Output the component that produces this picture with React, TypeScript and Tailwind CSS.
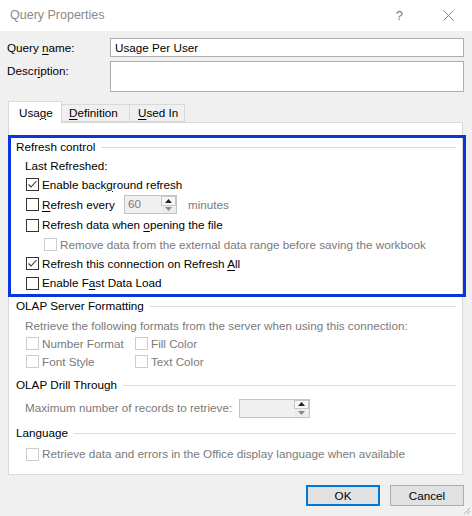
import React from 'react';

function Box({ checked, disabled }: { checked?: boolean; disabled?: boolean }) {
  return (
    <span
      className={`flex h-[13px] w-[13px] shrink-0 items-center justify-center border bg-white ${
        disabled ? 'border-[#cccccc]' : 'border-[#333333]'
      }`}
    >
      {checked && (
        <svg width="11" height="11" viewBox="0 0 11 11">
          <path d="M1.5 5.5 L4 8 L9.5 2" stroke="#333333" strokeWidth="1.1" fill="none" />
        </svg>
      )}
    </span>
  );
}

function Check({
  label,
  checked,
  disabled,
  className = '',
}: {
  label: React.ReactNode;
  checked?: boolean;
  disabled?: boolean;
  className?: string;
}) {
  return (
    <div className={`flex items-center gap-[3px] ${className}`}>
      <Box checked={checked} disabled={disabled} />
      <span className={disabled ? 'text-[#7a7a7a]' : 'text-black'}>{label}</span>
    </div>
  );
}

function Group({ title, className = '' }: { title: string; className?: string }) {
  return (
    <div className={`flex h-[20px] items-center ${className}`}>
      <span>{title}</span>
      <span className="ml-[6px] h-px flex-1 bg-[#dcdcdc]" />
    </div>
  );
}

function Spinner({ value, className = '' }: { value?: string; className?: string }) {
  return (
    <div className={`flex border border-[#c4c4c4] bg-[#f0f0f0] ${className}`}>
      <span className="flex-1 pl-[3px] leading-[16px] text-[#7a7a7a]">{value}</span>
      <div className="flex w-[15px] flex-col">
        <span className="flex flex-1 items-center justify-center border border-[#c8c8c8] bg-[#f7f7f7]">
          <svg width="7" height="4" viewBox="0 0 7 4">
            <path d="M0 4 L3.5 0 L7 4 Z" fill="#222222" />
          </svg>
        </span>
        <span className="flex flex-1 items-center justify-center bg-[#ececec]">
          <svg width="7" height="4" viewBox="0 0 7 4">
            <path d="M0 0 L3.5 4 L7 0 Z" fill="#8a8a8a" />
          </svg>
        </span>
      </div>
    </div>
  );
}

const U = ({ children }: { children: React.ReactNode }) => <span className="underline underline-offset-2">{children}</span>;

export default function App() {
  return (
    <div
      className="relative flex h-[516px] w-[472px] flex-col overflow-hidden bg-[#f0f0f0] text-[11.7px] text-black"
      style={{ fontFamily: '"Liberation Sans", Arial, sans-serif' }}
    >
      {/* Title bar */}
      <div className="flex h-[31px] shrink-0 items-center bg-white pl-[10px] text-[#8a8a8a]">
        <span className="flex-1 text-[12.5px]">Query Properties</span>
        <span className="mr-[40px] text-[13px] text-[#777777]">?</span>
        <svg width="11" height="11" viewBox="0 0 11 11" className="mr-[18px]">
          <path d="M0.5 0.5 L10.5 10.5 M10.5 0.5 L0.5 10.5" stroke="#777777" strokeWidth="0.9" />
        </svg>
      </div>

      {/* Name / description */}
      <div className="mt-[7px] flex items-center">
        <span className="w-[110px] pl-[7px]">
          Query <U>n</U>ame:
        </span>
        <div className="flex h-[19px] w-[354px] items-center border border-[#adadad] bg-white pl-[4px]">Usage Per User</div>
      </div>
      <div className="mt-[4px] flex items-start">
        <span className="w-[110px] pl-[7px] pt-[1px]">
          Descr<U>i</U>ption:
        </span>
        <div className="h-[31px] w-[354px] border border-[#adadad] bg-white" />
      </div>

      {/* Tabs */}
      <div className="relative z-10 mt-[9px] ml-[8px] flex items-end">
        <div className="-mb-px flex h-[22px] w-[54px] items-center border border-b-0 border-[#d9d9d9] bg-white pl-[10px]">
          Usa<U>g</U>e
        </div>
        <div className="flex h-[18px] w-[68px] items-center border border-l-0 border-[#d9d9d9] bg-[#f0f0f0] pl-[7px]">
          <U>D</U>efinition
        </div>
        <div className="flex h-[18px] w-[55px] items-center border border-l-0 border-[#d9d9d9] bg-[#f0f0f0] pl-[8px]">
          <U>U</U>sed In
        </div>
      </div>

      {/* Tab panel */}
      <div className="ml-[8px] flex h-[353px] w-[455px] flex-col border border-[#d9d9d9] bg-white pl-[7px] pr-[6px] pt-[14px]">
        <Group title="Refresh control" />
        <div className="ml-[9px] flex h-[18px] items-center">Last Refreshed:</div>
        <Check className="ml-[10px] h-[19px]" checked label={<>Enable back<U>g</U>round refresh</>} />
        <div className="ml-[10px] flex h-[21px] items-center">
          <Box />
          <span className="ml-[3px] w-[82px]">
            <U>R</U>efresh every
          </span>
          <Spinner value="60" className="h-[19px] w-[53px]" />
          <span className="ml-[11px] text-[#7a7a7a]">minutes</span>
        </div>
        <Check className="ml-[10px] h-[20px]" label={<>Refresh data when <U>o</U>pening the file</>} />
        <Check
          className="ml-[28px] h-[19px]"
          disabled
          label="Remove data from the external data range before saving the workbook"
        />
        <Check className="ml-[10px] h-[19px]" checked label={<>Refresh this connection on Refresh <U>A</U>ll</>} />
        <Check className="ml-[10px] h-[20px]" label={<>Enable F<U>a</U>st Data Load</>} />

        <Group title="OLAP Server Formatting" className="mt-[3px]" />
        <div className="ml-[9px] flex h-[19px] items-center text-[#7a7a7a]">
          Retrieve the following formats from the server when using this connection:
        </div>
        <div className="ml-[10px] flex h-[17px] items-center">
          <Check className="w-[109px]" disabled label="Number Format" />
          <Check disabled label="Fill Color" />
        </div>
        <div className="ml-[10px] flex h-[20px] items-center">
          <Check className="w-[109px]" disabled label="Font Style" />
          <Check disabled label="Text Color" />
        </div>

        <Group title="OLAP Drill Through" className="mt-[3px]" />
        <div className="ml-[9px] mt-[2px] flex h-[22px] items-center">
          <span className="w-[214px] text-[#7a7a7a]">Maximum number of records to retrieve:</span>
          <Spinner className="h-[19px] w-[71px]" />
        </div>

        <Group title="Language" className="mt-[4px]" />
        <Check
          className="ml-[10px] mt-[1px] h-[20px]"
          disabled
          label="Retrieve data and errors in the Office display language when available"
        />
      </div>

      {/* Buttons */}
      <div className="mt-[10px] flex justify-end gap-[10px] pr-[8px]">
        <button className="flex h-[21px] w-[74px] items-center justify-center border-2 border-[#0078d7] bg-[#e1e1e1]">OK</button>
        <button className="flex h-[21px] w-[74px] items-center justify-center border border-[#adadad] bg-[#e1e1e1]">Cancel</button>
      </div>

      {/* Resize grip */}
      <svg width="8" height="8" viewBox="0 0 8 8" className="absolute bottom-[1px] right-[1px]">
        <path d="M7 1 L1 7 M7 4 L4 7" stroke="#b0b0b0" strokeWidth="1" />
      </svg>

      {/* Highlight annotation */}
      <div className="pointer-events-none absolute left-[8px] top-[135px] h-[162px] w-[458px] border-[3px] border-[#0a36e0]" />
    </div>
  );
}
